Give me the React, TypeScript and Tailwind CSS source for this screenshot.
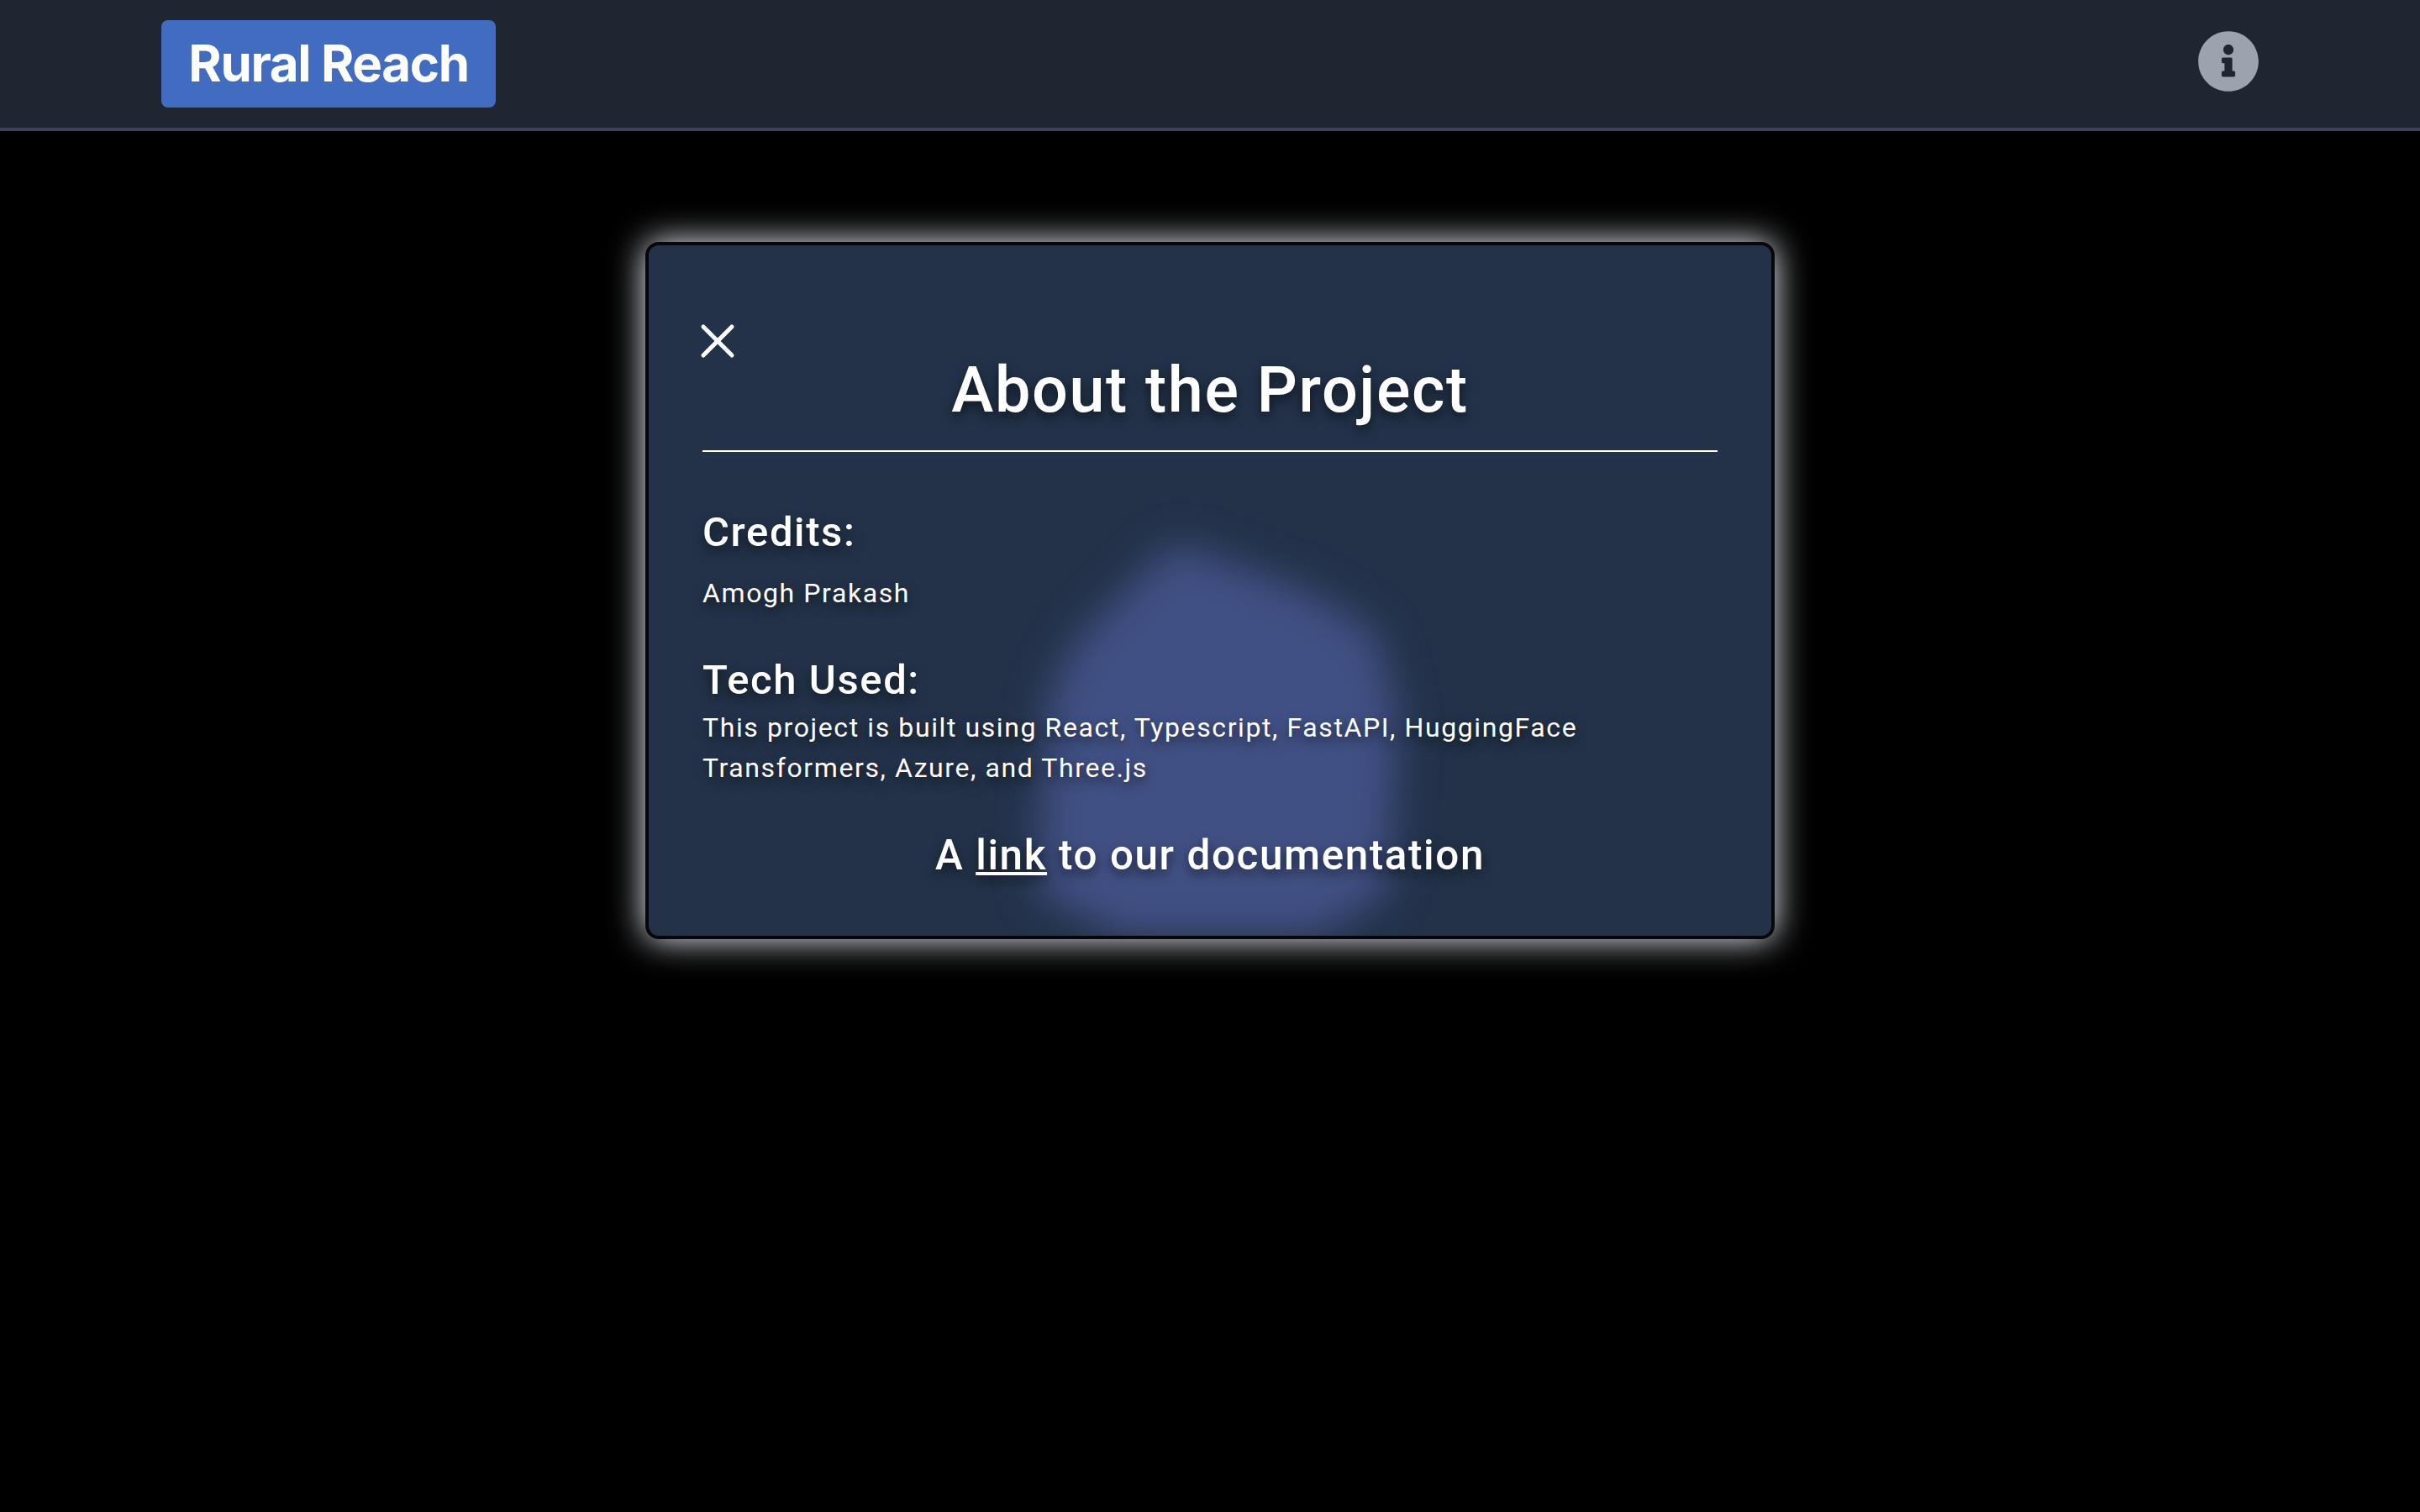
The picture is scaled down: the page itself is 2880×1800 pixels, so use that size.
import { X } from "lucide-react";
import { FaInfoCircle } from "react-icons/fa";

const textShadow = "[text-shadow:0_6px_14px_rgba(0,0,0,0.6)]";

export default function App() {
  return (
    <div className="min-h-screen bg-black font-['Roboto',sans-serif] text-white">
      <header className="flex h-[156px] items-center justify-between border-b-4 border-[#3d4354] bg-[#1f2632] px-[192px]">
        <div className="flex h-[104px] w-[398px] items-center justify-center rounded-lg bg-[#426cbf] pb-[2px]">
          <span className="font-['Inter',sans-serif] text-[60px] font-bold tracking-[-1.35px]">Rural Reach</span>
        </div>
        <button className="mr-[-1px] mb-[6px] text-[#9ca3af]">
          <FaInfoCircle size={74} />
        </button>
      </header>

      <main className="pt-[132px]">
        <div className="relative mx-auto h-[830px] w-[1344px] overflow-hidden rounded-[16px] border-4 border-[#05070a] bg-[#233249] px-16 pt-[124px] shadow-[0_0_40px_#f0f5ff]">
          <button className="absolute left-[48px] top-[80px]">
            <X size={68} strokeWidth={1.8} />
          </button>
          <svg className="absolute inset-0 h-full w-full blur-[24px]" viewBox="0 0 1336 822">
            <polygon fill="#415084" points="625,355 510,470 475,540 462,770 570,825 790,825 880,770 892,560 865,460 780,410" />
          </svg>
          <div className="relative tracking-[1.6px]">
            <h1 className={`border-b-2 border-white pb-[24px] text-center text-[75.5px] leading-[96px] font-medium ${textShadow}`}>About the Project</h1>
            <h2 className={`mt-[64px] text-[49px] leading-[64px] font-medium ${textShadow}`}>Credits:</h2>
            <p className={`mt-4 text-[32px] leading-[48px] ${textShadow}`}>Amogh Prakash</p>
            <h2 className={`mt-12 text-[49px] leading-[64px] font-medium ${textShadow}`}>Tech Used:</h2>
            <p className={`w-[1100px] text-[32px] leading-[48px] ${textShadow}`}>This project is built using React, Typescript, FastAPI, HuggingFace Transformers, Azure, and Three.js</p>
            <p className={`mt-12 text-center text-[49.4px] leading-[64px] font-medium ${textShadow}`}>A <a className="underline">link</a> to our documentation</p>
          </div>
        </div>
      </main>
    </div>
  );
}
